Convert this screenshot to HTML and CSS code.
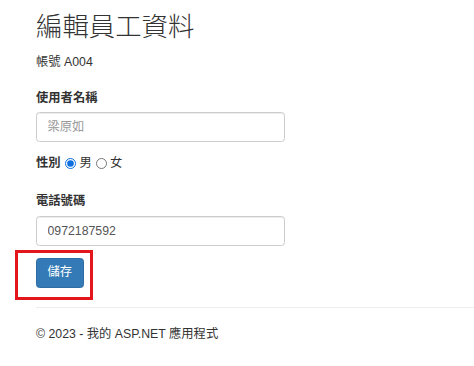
FILE: index.html
```html
<!DOCTYPE html>
<html lang="zh-Hant">
<head>
<meta charset="utf-8">
<title>編輯員工資料</title>
<link rel="stylesheet" href="styles.css">
</head>
<body>
<div class="container">
  <h2 class="title">編輯員工資料</h2>
  <p class="account">帳號 A004</p>
  <form class="form">
    <div class="group group-name">
      <label class="label" for="name">使用者名稱</label>
      <input class="input" id="name" type="text" placeholder="梁原如">
    </div>
    <div class="gender">
      <span class="label">性別</span>
      <input class="radio radio-male" type="radio" name="g" checked>
      <span class="opt opt-male">男</span>
      <input class="radio radio-female" type="radio" name="g">
      <span class="opt">女</span>
    </div>
    <div class="group group-phone">
      <label class="label" for="phone">電話號碼</label>
      <input class="input" id="phone" type="text" value="0972187592">
    </div>
    <div class="actions">
      <button class="btn" type="button">儲存</button>
      <span class="highlight"></span>
    </div>
  </form>
</div>
<hr class="rule">
<footer class="footer">© 2023 - 我的 ASP.NET 應用程式</footer>
</body>
</html>
```

FILE: styles.css
```css
html, body {
  margin: 0;
  padding: 0;
  background: #fff;
}
body {
  font-family: "Liberation Sans", "Noto Sans CJK TC", sans-serif;
  font-size: 12.3px;
  line-height: 17.6px;
  color: #333;
}
.container {
  padding-left: 36px;
}
.title {
  margin: 10px 0 0;
  font-family: "Noto Sans CJK TC", sans-serif;
  font-size: 26.4px;
  line-height: 29px;
  font-weight: 300;
  color: #333;
}
.account {
  margin: 15px 0 0;
}
.form {
  margin: 0;
}
.group {
  display: flex;
  flex-direction: column;
  align-items: flex-start;
}
.group-name {
  margin-top: 18px;
}
.group-phone {
  margin-top: 21px;
}
.label {
  font-weight: bold;
  display: block;
}
.group .label {
  margin-bottom: 4.4px;
}
.group-phone .label {
  margin-bottom: 5.4px;
}
.input {
  box-sizing: border-box;
  width: 249px;
  height: 30px;
  margin: 0;
  padding: 0 10.5px;
  border: 1px solid #ccc;
  border-radius: 3.5px;
  box-shadow: inset 0 1px 1px rgba(0, 0, 0, 0.075);
  font-family: "Liberation Sans", "Noto Sans CJK TC", sans-serif;
  font-size: 12.3px;
  color: #555;
  background: #fff;
  outline: none;
}
.input::placeholder {
  color: #999;
}
.gender {
  margin-top: 13px;
  display: flex;
  align-items: center;
  height: 17.6px;
}
.radio {
  width: 11px;
  height: 11px;
  margin: 0;
  accent-color: #0b6fe0;
}
.radio-male {
  margin-left: 4px;
  margin-right: 4px;
}
.radio-female {
  margin-left: 4px;
  margin-right: 3px;
}
.actions {
  position: relative;
  margin-top: 12px;
}
.btn {
  box-sizing: border-box;
  height: 30px;
  padding: 0 10.5px;
  border: 1px solid #2e6da4;
  border-radius: 3.5px;
  background: #337ab7;
  color: #fff;
  font-family: "Liberation Sans", "Noto Sans CJK TC", sans-serif;
  font-size: 12.3px;
  line-height: 17.6px;
  cursor: pointer;
}
.highlight {
  position: absolute;
  left: -21px;
  top: -8px;
  width: 78px;
  height: 50px;
  box-sizing: border-box;
  border: 3px solid #e2161b;
  pointer-events: none;
}
.rule {
  margin: 19px 0 0 36px;
  border: 0;
  border-top: 1px solid #eee;
  height: 0;
}
.footer {
  margin: 18px 0 0 36px;
}
```
